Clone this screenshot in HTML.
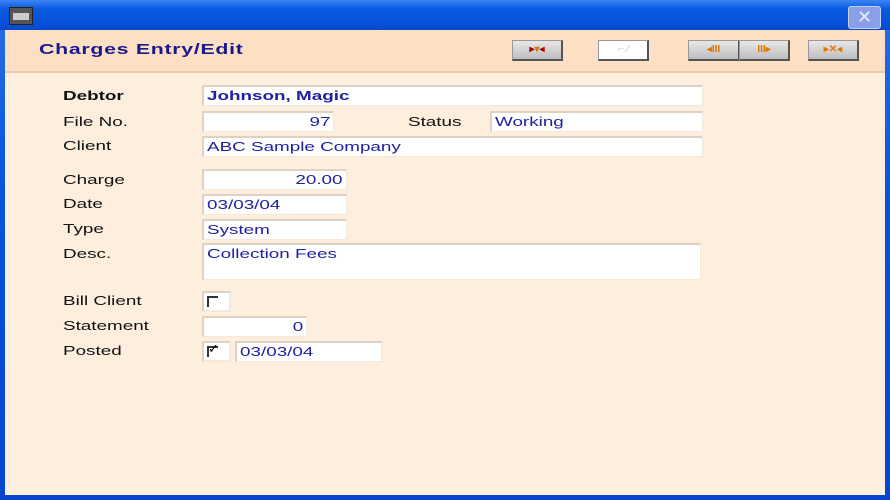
<!DOCTYPE html>
<html><head><style>
body{margin:0;width:890px;height:500px;overflow:hidden;font-family:"Liberation Sans",sans-serif;background:#0a46d8}
.win{position:absolute;left:0;top:0;width:890px;height:500px;background:linear-gradient(#2a6fe8,#0752dc 40%,#0545d0)}
.tb{position:absolute;left:0;top:0;width:890px;height:30px;background:linear-gradient(#3c85f5,#0a5ae2 30%,#0550d8 80%,#0a48c8)}
.ico{position:absolute;left:9px;top:7px;width:22px;height:16px;background:#555;border:1px solid #222}
.ico:after{content:"";position:absolute;left:3px;top:5px;width:16px;height:7px;background:#ccc}
.cls{position:absolute;left:848px;top:6px;width:31px;height:21px;background:#8a9fe8;border:1px solid #c8d2f2;border-radius:3px;color:#e8ecff;font-size:18px;text-align:center;line-height:21px}
.client{position:absolute;left:5px;top:30px;width:880px;height:465px;background:#fdeedd}
.hdr{position:absolute;left:0;top:0;width:880px;height:41px;background:#fde0c4;border-bottom:2px solid #e8cdb2}
.ttl{position:absolute;left:34px;top:11px;font-weight:bold;font-size:15px;color:#1a1a8c;letter-spacing:.5px;transform:scaleX(1.42);transform-origin:left}
.btn{position:absolute;top:10px;height:18px;background:linear-gradient(#e8e8e8,#bdbdbd);border:1px solid #999;border-right:2px solid #555;border-bottom:2px solid #555;font-size:10px;text-align:center;line-height:18px;font-weight:bold;color:#e07800}
.lbl{position:absolute;font-size:13px;color:#111;transform:scaleX(1.45);transform-origin:left}
.f{position:absolute;height:18px;background:#fff;border-top:2px solid #ddd2c4;border-left:2px solid #ddd2c4;border-right:1px solid #f4e8da;border-bottom:1px solid #f4e8da;font-size:13px;color:#2020a0;line-height:18px;padding:0 3px;box-sizing:content-box;overflow:hidden;white-space:nowrap}
.f span{display:inline-block;transform:scaleX(1.45);transform-origin:left}
.r{text-align:right}
.r span{transform-origin:right}
.cb{position:absolute;width:25px;height:17px;background:#fff;border:2px solid #ddd2c4;border-right-color:#f4e8da;border-bottom-color:#f4e8da}
.cb i{position:absolute;left:3px;top:3px;width:9px;height:9px;border-top:2px solid #333;border-left:2px solid #333}
</style></head><body>
<div class="win">
<div class="tb"><div class="ico"></div><div class="cls">✕</div></div>
<div class="client">
<div class="hdr">
<div class="ttl">Charges Entry/Edit</div>
<div class="btn" style="left:507px;width:48px"><span style="color:#a00">▸</span>▾<span style="color:#a00">◂</span></div>
<div class="btn" style="left:593px;width:48px;background:#fff;color:#ccc">⌐ ⁄</div>
<div class="btn" style="left:683px;width:49px">◂III</div>
<div class="btn" style="left:734px;width:48px">III▸</div>
<div class="btn" style="left:803px;width:48px">▸✕◂</div>
</div>
<div class="lbl" style="left:58px;top:58px;font-weight:bold">Debtor</div>
<div class="f" style="left:197px;top:55px;width:492px;font-weight:bold"><span>Johnson, Magic</span></div>
<div class="lbl" style="left:58px;top:84px">File No.</div>
<div class="f r" style="left:197px;top:81px;width:123px"><span>97</span></div>
<div class="lbl" style="left:403px;top:84px">Status</div>
<div class="f" style="left:485px;top:81px;width:204px"><span>Working</span></div>
<div class="lbl" style="left:58px;top:108px">Client</div>
<div class="f" style="left:197px;top:106px;width:492px"><span>ABC Sample Company</span></div>
<div class="lbl" style="left:58px;top:142px">Charge</div>
<div class="f r" style="left:197px;top:139px;width:136px"><span>20.00</span></div>
<div class="lbl" style="left:58px;top:166px">Date</div>
<div class="f" style="left:197px;top:164px;width:136px"><span>03/03/04</span></div>
<div class="lbl" style="left:58px;top:191px">Type</div>
<div class="f" style="left:197px;top:189px;width:136px"><span>System</span></div>
<div class="lbl" style="left:58px;top:216px">Desc.</div>
<div class="f" style="left:197px;top:213px;width:490px;height:34px"><span>Collection Fees</span></div>
<div class="lbl" style="left:58px;top:263px">Bill Client</div>
<div class="cb" style="left:197px;top:261px"><i></i></div>
<div class="lbl" style="left:58px;top:288px">Statement</div>
<div class="f r" style="left:197px;top:286px;width:96px"><span>0</span></div>
<div class="lbl" style="left:58px;top:313px">Posted</div>
<div class="cb" style="left:197px;top:311px"><i></i><span style="position:absolute;left:4px;top:-2px;font-size:13px">✓</span></div>
<div class="f" style="left:230px;top:311px;width:138px"><span>03/03/04</span></div>
</div>
</div>
</body></html>
